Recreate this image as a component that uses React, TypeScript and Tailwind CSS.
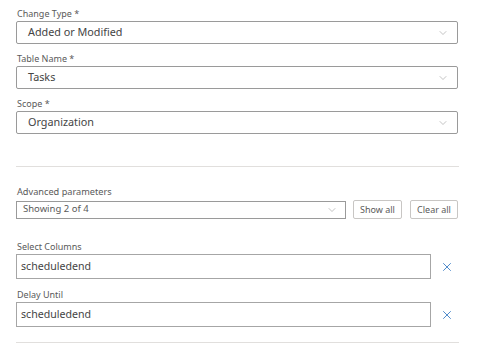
import { ChevronDown, X } from "lucide-react";

type FieldProps = {
  label: string;
  required?: boolean;
  value: string;
  className?: string;
};

function Label({ text, required }: { text: string; required?: boolean }) {
  return (
    <p className="h-[13px] text-[9px] leading-[12px] text-[#5a5a5a] pl-px">
      {text}
      {required && <span> *</span>}
    </p>
  );
}

function Dropdown({ label, required, value, className }: FieldProps) {
  return (
    <div className={className}>
      <Label text={label} required={required} />
      <div className="h-[23px] flex items-center justify-between border border-[#9a9a9a] rounded-[2px] pl-[11px] pr-[8px] bg-white">
        <span className="text-[10.8px] text-[#444]">{value}</span>
        <ChevronDown className="w-[12px] h-[12px] text-[#9a9a9a]" strokeWidth={1.2} />
      </div>
    </div>
  );
}

function ClearableInput({ label, value, className }: FieldProps) {
  return (
    <div className={className}>
      <Label text={label} />
      <div className="flex items-center">
        <div className="w-[415px] h-[25px] flex items-center border border-[#a6a6a6] pl-[4px] bg-white">
          <span className="text-[10.6px] text-[#444]">{value}</span>
        </div>
        <X className="ml-[9px] w-[14px] h-[14px] text-[#2a72c0]" strokeWidth={1.4} />
      </div>
    </div>
  );
}

export default function App() {
  return (
    <div
      className="w-[480px] h-[348px] bg-white pl-4 pr-[22px] pt-[8px] overflow-hidden"
      style={{ fontFamily: '"Noto Sans", "Open Sans", sans-serif' }}
    >
      <Dropdown label="Change Type" required value="Added or Modified" />
      <Dropdown label="Table Name" required value="Tasks" className="mt-[9px]" />
      <Dropdown label="Scope" required value="Organization" className="mt-[9px]" />

      <div className="mt-[32px] h-px bg-[#e1dfdd] w-[443px]" />

      <div className="mt-[18px]">
        <p className="h-[15px] text-[9.2px] leading-[13px] text-[#5a5a5a] pl-px">
          Advanced parameters
        </p>
        <div className="flex items-center gap-x-[7px]">
          <div className="w-[330px] h-[18px] flex items-center justify-between border border-[#9a9a9a] pl-[6px] pr-[7px]">
            <span className="text-[9.5px] text-[#5a5a5a]">Showing 2 of 4</span>
            <ChevronDown className="w-[12px] h-[12px] text-[#9a9a9a]" strokeWidth={1.2} />
          </div>
          <button className="w-[49px] h-[19px] border border-[#c8c6c4] rounded-[2px] text-[9px] text-[#5a5a5a]">
            Show all
          </button>
          <button className="ml-px w-[48px] h-[19px] border border-[#c8c6c4] rounded-[2px] text-[9px] text-[#5a5a5a]">
            Clear all
          </button>
        </div>
      </div>

      <ClearableInput label="Select Columns" value="scheduledend" className="mt-[22px]" />
      <ClearableInput label="Delay Until" value="scheduledend" className="mt-[10px]" />

      <div className="mt-[15px] h-px bg-[#e1dfdd] w-[443px]" />
    </div>
  );
}
